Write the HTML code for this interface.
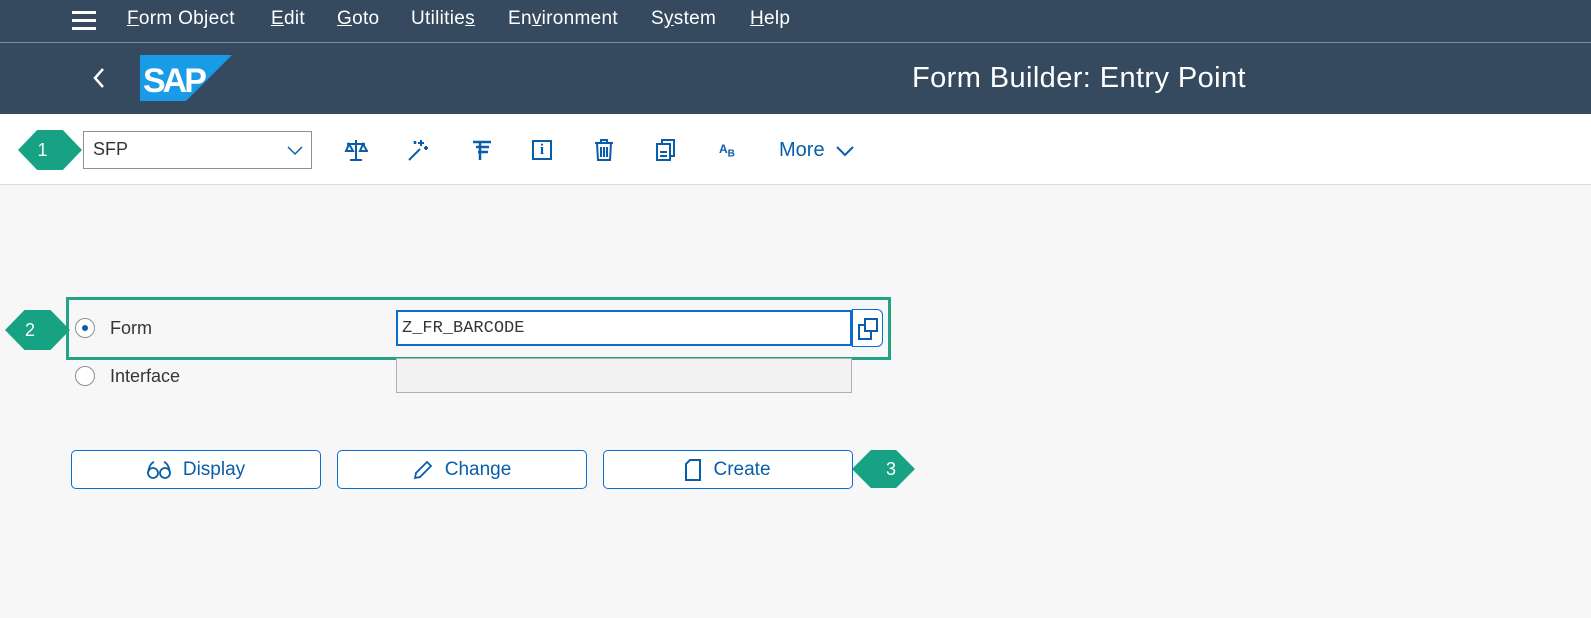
<html><head><style>
body{margin:0;width:1591px;height:618px;background:#f7f7f7;font-family:"Liberation Sans",sans-serif;position:relative;overflow:hidden}
.a{position:absolute}
.menu{left:0;top:0;width:1591px;height:42px;background:#354a5f;border-bottom:1px solid #7c8ea0}
.menu span{position:absolute;top:8px;color:#fff;font-size:19px;letter-spacing:0.3px}
.hdr{left:0;top:43px;width:1591px;height:71px;background:#354a5f}
.tb{left:0;top:114px;width:1591px;height:70px;background:#fff;border-bottom:1px solid #ddd}
.ic{position:absolute;top:138px}
.btn{position:absolute;top:450px;height:39px;border:1px solid #0a6ed1;border-radius:5px;background:#fff;color:#0a5ea9;font-size:19px;display:flex;align-items:center;justify-content:center;gap:12px;box-sizing:border-box}
.badge{position:absolute;background:#17a383;color:#fff;font-size:18px;display:flex;align-items:center;justify-content:center;filter:drop-shadow(1px 3px 2px rgba(0,0,0,.35))}
</style></head><body>
<div class="a menu">
<div class="a" style="left:72px;top:11px;width:24px;height:3px;background:#fff;box-shadow:0 8px 0 #fff,0 16px 0 #fff"></div>
<span style="left:127px"><u>F</u>orm Object</span><span style="left:271px"><u>E</u>dit</span><span style="left:337px"><u>G</u>oto</span><span style="left:411px">Utilitie<u>s</u></span><span style="left:508px">En<u>v</u>ironment</span><span style="left:651px">S<u>y</u>stem</span><span style="left:750px"><u>H</u>elp</span>
</div>
<div class="a hdr">
<svg class="a" style="left:92px;top:24px" width="14" height="22"><path d="M11 2 L3 11 L11 20" stroke="#fff" stroke-width="2.5" fill="none"/></svg>
<svg class="a" style="left:140px;top:12px" width="92" height="46"><polygon points="0,0 92,0 46,46 0,46" fill="#1a9be8"/><text x="3" y="37" font-family="Liberation Sans" font-weight="bold" font-size="34" fill="#fff" letter-spacing="-3">SAP</text></svg>
<div class="a" style="left:912px;top:19px;color:#fff;font-size:29px;letter-spacing:0.4px">Form Builder: Entry Point</div>
</div>
<div class="a tb"></div>
<div class="a" style="left:83px;top:131px;width:229px;height:38px;border:1px solid #89919a;background:#fff;box-sizing:border-box"><span class="a" style="left:9px;top:7px;font-size:18px;color:#32363a">SFP</span>
<svg class="a" style="left:203px;top:14px" width="16" height="10"><path d="M1 1 L8 8 L15 1" stroke="#0a5ea9" stroke-width="1.5" fill="none"/></svg></div>
<svg class="ic" style="left:344px" width="24" height="24" fill="none" stroke="#0a5ea9" stroke-width="2"><path d="M12 2v20M6 22h12M3 6h18M5 6l-3 7h7zM19 6l-3 7h7z"/></svg>
<svg class="ic" style="left:406px" width="24" height="24" fill="none" stroke="#0a5ea9" stroke-width="2"><path d="M3 22L14 11M15 2v6M12 5h6M20 8v4M18 10h4M9 3v3M7.5 4.5h3"/></svg>
<svg class="ic" style="left:470px" width="24" height="24" fill="none" stroke="#0a5ea9" stroke-width="2.5"><path d="M3 4h18M6 9h13M10 4v18M8 14h10"/></svg>
<div class="a" style="left:532px;top:140px;width:20px;height:20px;border:2px solid #0a5ea9;box-sizing:border-box;font:bold 15px 'Liberation Serif';color:#0a5ea9;text-align:center;line-height:16px">i</div>
<svg class="ic" style="left:593px" width="22" height="24" fill="none" stroke="#0a5ea9" stroke-width="2"><path d="M2 5h18M8 5V2h6v3M4 5l1 17h12l1-17M8 9v10M11 9v10M14 9v10"/></svg>
<svg class="ic" style="left:655px" width="22" height="24" fill="none" stroke="#0a5ea9" stroke-width="2"><path d="M7 6V2h12v16h-4M2 6h13v16H2zM5 14h7M5 18h7"/></svg>
<span class="a" style="left:719px;top:142px;color:#0a5ea9;font-size:12px;font-weight:bold">A<sub>B</sub></span>
<span class="a" style="left:779px;top:139px;color:#0a5ea9;font-size:20px">More</span>
<svg class="a" style="left:836px;top:146px" width="18" height="11"><path d="M1 1 L9 9 L17 1" stroke="#0a5ea9" stroke-width="2" fill="none"/></svg>
<div class="badge" style="left:18px;top:130px;width:64px;height:40px;clip-path:polygon(30% 0,70% 0,100% 50%,70% 100%,30% 100%,0 50%);border-radius:20px 0 0 20px">1&nbsp;&nbsp;&nbsp;</div>
<div class="a" style="left:66px;top:297px;width:825px;height:63px;border:3px solid #25a385;box-sizing:border-box"></div>
<div class="badge" style="left:5px;top:310px;width:65px;height:40px;clip-path:polygon(30% 0,70% 0,100% 50%,70% 100%,30% 100%,0 50%);border-radius:20px 0 0 20px">2&nbsp;&nbsp;&nbsp;</div>
<div class="badge" style="left:852px;top:450px;width:63px;height:38px;clip-path:polygon(0 50%,30% 0,70% 0,100% 50%,70% 100%,30% 100%);border-radius:0 19px 19px 0">&nbsp;&nbsp;&nbsp;3</div>
<div class="a" style="left:75px;top:318px;width:20px;height:20px;border:1px solid #89919a;border-radius:50%;background:#fff;box-sizing:border-box"><div class="a" style="left:6px;top:6px;width:6px;height:6px;border-radius:50%;background:#0a5ea9"></div></div>
<span class="a" style="left:110px;top:318px;font-size:18px;color:#32363a">Form</span>
<div class="a" style="left:75px;top:366px;width:20px;height:20px;border:1px solid #89919a;border-radius:50%;background:#fff;box-sizing:border-box"></div>
<span class="a" style="left:110px;top:366px;font-size:18px;color:#32363a">Interface</span>
<div class="a" style="left:396px;top:310px;width:456px;height:36px;border:2px solid #0a6ed1;background:#fff;box-sizing:border-box"><span class="a" style="left:4px;top:7px;font:17px 'Liberation Mono';color:#32363a">Z_FR_BARCODE</span></div>
<div class="a" style="left:852px;top:309px;width:31px;height:38px;border:1px solid #0a6ed1;border-radius:0 6px 6px 0;background:#fff;box-sizing:border-box"><svg class="a" style="left:4px;top:8px" width="22" height="22" fill="none" stroke="#0a5ea9" stroke-width="2"><path d="M8 1h12v12H8zM8 7H2v14h12v-8"/></svg></div>
<div class="a" style="left:396px;top:358px;width:456px;height:35px;border:1px solid #b0b0b0;background:#f2f2f2;box-sizing:border-box"></div>
<div class="btn" style="left:71px;width:250px"><svg width="24" height="18" fill="none" stroke="#0a5ea9" stroke-width="1.8"><circle cx="6" cy="12" r="5"/><circle cx="18" cy="12" r="5"/><path d="M1 12C2 5 4 2 7 1M23 12C22 5 20 2 17 1"/></svg>Display</div>
<div class="btn" style="left:337px;width:250px"><svg width="20" height="20" fill="none" stroke="#0a5ea9" stroke-width="1.8"><path d="M2 18l1-5L14 2l4 4L7 17z"/></svg>Change</div>
<div class="btn" style="left:603px;width:250px"><svg width="16" height="22" fill="none" stroke="#0a5ea9" stroke-width="2"><path d="M5 1h10v20H1V5z"/></svg>Create</div>
</body></html>
